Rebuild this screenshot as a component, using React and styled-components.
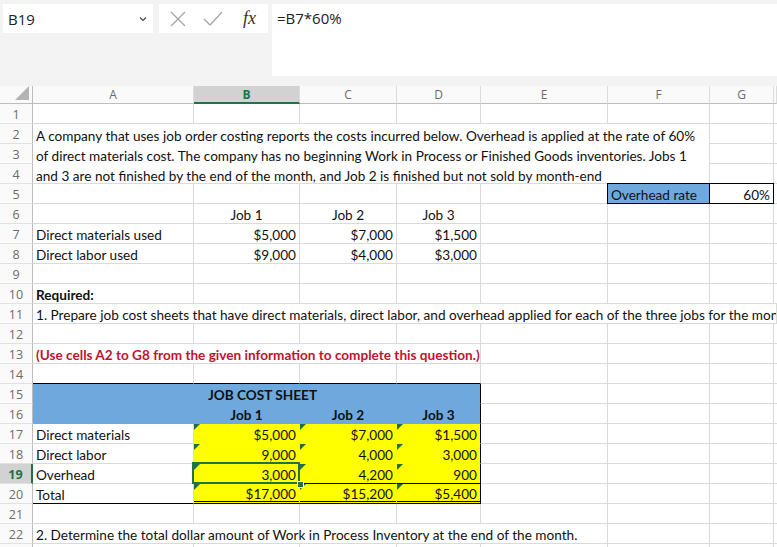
import React from 'react';
import styled, { createGlobalStyle, css } from 'styled-components';

const GREEN = '#217346';
const BLUE = '#6fa8dc';
const YELLOW = '#ffff00';
const RED = '#c0142c';
const GRID = '#dadada';
const BLACK = '#000';

const GlobalStyle = createGlobalStyle`
  html, body { margin: 0; padding: 0; background: #fff; overflow: hidden; }
  body { font-family: Lato, "Open Sans", sans-serif; }
`;

const Page = styled.div`
  width: 777px;
  height: 547px;
  overflow: hidden;
  background: #fff;
`;

const FormulaBar = styled.div`
  height: 86px;
  box-sizing: border-box;
  background: #f3f3f3;
  display: flex;
  align-items: flex-start;
  padding: 4px 0 0 3px;
`;

const NameBox = styled.div`
  width: 150px;
  height: 29px;
  box-sizing: border-box;
  background: #fff;
  display: flex;
  align-items: center;
  justify-content: space-between;
  padding: 0 5px 0 5px;
  font-family: "Open Sans", sans-serif;
  font-size: 15px;
  color: #222;
`;

const FnBox = styled.div`
  width: 109px;
  height: 29px;
  margin-left: 6px;
  box-sizing: border-box;
  background: #fff;
  display: flex;
  align-items: center;
  padding: 0 0 0 9px;
  gap: 14px;
`;

const FxLabel = styled.span`
  font-family: "Liberation Serif", serif;
  font-style: italic;
  font-size: 18px;
  color: #333;
  margin-left: 5px;
`;

const FormulaInput = styled.div`
  flex: 1;
  height: 72px;
  margin-left: 4px;
  box-sizing: border-box;
  background: #fff;
  padding: 4px 5px;
  font-family: "Open Sans", sans-serif;
  font-size: 15px;
  color: #222;
`;

const Sheet = styled.div`
  display: grid;
  grid-template-columns: 33px 161px 106px 97px 84px 127px 102px 64px 3px;
  grid-template-rows: 18px;
  grid-auto-rows: 20px;
  font-size: 13.6px;
  color: #111;
`;

const Corner = styled.div`
  grid-area: 1 / 1;
  background: #fafafa;
  border-right: 1px solid #bdbdbd;
  border-bottom: 1px solid #bdbdbd;
  box-sizing: border-box;
  display: flex;
  align-items: flex-end;
  justify-content: flex-end;
  padding: 0 3px 3px 0;
`;

const ColHead = styled.div`
  grid-area: 1 / ${(p) => p.$col + 1};
  box-sizing: border-box;
  background: #fafafa;
  border-right: 1px solid #dcdcdc;
  border-bottom: 1px solid #bdbdbd;
  display: flex;
  align-items: center;
  justify-content: center;
  font-family: "Open Sans", sans-serif;
  font-size: 12px;
  color: #6b6b6b;
  ${(p) =>
    p.$active &&
    css`
      background: #d2d2d2;
      color: ${GREEN};
      font-weight: 700;
      border-bottom: 2px solid ${GREEN};
    `}
`;

const RowHead = styled.div`
  grid-area: ${(p) => p.$row + 1} / 1;
  box-sizing: border-box;
  background: #fafafa;
  border-right: 1px solid #bdbdbd;
  border-bottom: 1px solid #e1e1e1;
  display: flex;
  align-items: center;
  justify-content: center;
  padding-top: 2px;
  font-family: "Open Sans", sans-serif;
  font-size: 12.5px;
  color: #6b6b6b;
  ${(p) =>
    p.$active &&
    css`
      background: #d2d2d2;
      color: ${GREEN};
      font-weight: 700;
      border-right: 2px solid ${GREEN};
    `}
`;

const Cell = styled.div`
  grid-row: ${(p) => p.$row + 1} / span ${(p) => p.$rspan || 1};
  grid-column: ${(p) => p.$col + 1} / span ${(p) => p.$span || 1};
  position: relative;
  box-sizing: border-box;
  min-width: 0;
  overflow: ${(p) => (p.$selected ? 'visible' : 'hidden')};
  white-space: nowrap;
  background: ${(p) => p.$bg || '#fff'};
  border-right: 1px solid ${(p) => p.$br || GRID};
  border-bottom: ${(p) => p.$bb || `1px solid ${GRID}`};
  display: flex;
  flex-direction: column;
  justify-content: ${(p) => (p.$rspan ? 'flex-start' : 'center')};
  align-items: ${(p) =>
    p.$align === 'right' ? 'flex-end' : p.$align === 'center' ? 'center' : 'flex-start'};
  padding: 2px 3px 0 ${(p) => p.$indent || 3}px;
  font-weight: ${(p) => (p.$bold ? 700 : 400)};
  color: ${(p) => p.$color || '#111'};
  ${(p) =>
    p.$boxed &&
    css`
      box-shadow: 0 -1px 0 ${BLACK}, -1px 0 0 ${BLACK}, -1px -1px 0 ${BLACK};
      z-index: 1;
    `}
  ${(p) =>
    p.$flag &&
    css`
      &::before {
        content: '';
        position: absolute;
        top: 0;
        left: 0;
        border-top: 6px solid #1e7145;
        border-right: 6px solid transparent;
      }
    `}
  ${(p) =>
    p.$selected &&
    css`
      z-index: 2;
      &::after {
        content: '';
        position: absolute;
        top: -2px;
        left: -2px;
        right: -1px;
        bottom: -1px;
        border: 2px solid ${GREEN};
      }
    `}
`;

const Line = styled.span`
  display: block;
  height: 20px;
  line-height: 20px;
`;

const Handle = styled.span`
  position: absolute;
  right: -5px;
  bottom: -5px;
  width: 5px;
  height: 5px;
  background: ${GREEN};
  border: 1px solid #fff;
  z-index: 3;
`;

const CloseIcon = () => (
  <svg width="20" height="20" viewBox="0 0 20 20">
    <path d="M3 3 L17 17 M17 3 L3 17" stroke="#a6a6a6" strokeWidth="1.3" fill="none" />
  </svg>
);

const CheckIcon = () => (
  <svg width="22" height="20" viewBox="0 0 22 20">
    <path d="M2 10 L8 16 L20 3" stroke="#a6a6a6" strokeWidth="1.3" fill="none" />
  </svg>
);

const Chevron = () => (
  <svg width="10" height="8" viewBox="0 0 10 8">
    <path d="M2 2.5 L5 5.5 L8 2.5" stroke="#444" strokeWidth="1.2" fill="none" />
  </svg>
);

const CornerMark = () => (
  <svg width="14" height="14" viewBox="0 0 14 14">
    <polygon points="14,0 14,14 0,14" fill="#b4b4b4" />
  </svg>
);

const COLS = ['A', 'B', 'C', 'D', 'E', 'F', 'G', ''];
const ROW_COUNT = 23;

// row -> list of cell specs (col 1 = A)
const yellowRow = (row, values, last) =>
  values.map((v, i) => ({
    col: i + 2,
    text: v,
    align: 'right',
    bg: YELLOW,
    flag: true,
    br: i === 2 ? BLACK : YELLOW,
    bb: last ? `3px double ${BLACK}` : row === 19 ? `1px solid ${BLACK}` : `1px solid ${YELLOW}`,
    selected: row === 19 && i === 0,
  }));

const SPECS = {
  2: [
    {
      col: 1,
      span: 6,
      rspan: 3,
      lines: [
        'A company that uses job order costing reports the costs incurred below. Overhead is applied at the rate of 60%',
        'of direct materials cost. The company has no beginning Work in Process or Finished Goods inventories. Jobs 1',
        'and 3 are not finished by the end of the month, and Job 2 is finished but not sold by month-end',
      ],
    },
  ],
  4: [{ col: 7, bb: `1px solid ${BLACK}` }],
  5: [
    { col: 5, br: BLACK },
    { col: 6, text: 'Overhead rate', bg: BLUE, br: BLACK, bb: `1px solid ${BLACK}`, boxed: true },
    { col: 7, text: '60%', align: 'right', br: BLACK, bb: `1px solid ${BLACK}`, boxed: true },
  ],
  6: [
    { col: 2, text: 'Job 1', align: 'center' },
    { col: 3, text: 'Job 2', align: 'center' },
    { col: 4, text: 'Job 3', align: 'center' },
  ],
  7: [
    { col: 1, text: 'Direct materials used' },
    { col: 2, text: '$5,000', align: 'right' },
    { col: 3, text: '$7,000', align: 'right' },
    { col: 4, text: '$1,500', align: 'right' },
  ],
  8: [
    { col: 1, text: 'Direct labor used' },
    { col: 2, text: '$9,000', align: 'right' },
    { col: 3, text: '$4,000', align: 'right' },
    { col: 4, text: '$3,000', align: 'right' },
  ],
  10: [{ col: 1, text: 'Required:', bold: true }],
  11: [
    {
      col: 1,
      span: 8,
      text: '1. Prepare job cost sheets that have direct materials, direct labor, and overhead applied for each of the three jobs for the month.',
    },
  ],
  13: [
    {
      col: 1,
      span: 4,
      text: '(Use cells A2 to G8 from the given information to complete this question.)',
      bold: true,
      color: RED,
    },
  ],
  14: [1, 2, 3, 4].map((col) => ({ col, bb: `1px solid ${BLACK}` })),
  15: [
    { col: 1, bg: BLUE, br: BLUE, bb: `1px solid ${BLUE}` },
    { col: 2, span: 2, text: 'JOB COST SHEET', bold: true, indent: 14, bg: BLUE, br: BLUE, bb: `1px solid ${BLUE}` },
    { col: 4, bg: BLUE, br: BLACK, bb: `1px solid ${BLUE}` },
  ],
  16: [
    { col: 1, bg: BLUE, br: BLUE, bb: `1px solid ${BLUE}` },
    { col: 2, text: 'Job 1', bold: true, align: 'center', bg: BLUE, br: BLUE, bb: `1px solid ${BLUE}` },
    { col: 3, text: 'Job 2', bold: true, align: 'center', bg: BLUE, br: BLUE, bb: `1px solid ${BLUE}` },
    { col: 4, text: 'Job 3', bold: true, align: 'center', bg: BLUE, br: BLACK, bb: `1px solid ${BLUE}` },
  ],
  17: [{ col: 1, text: 'Direct materials' }, ...yellowRow(17, ['$5,000', '$7,000', '$1,500'])],
  18: [{ col: 1, text: 'Direct labor' }, ...yellowRow(18, ['9,000', '4,000', '3,000'])],
  19: [{ col: 1, text: 'Overhead' }, ...yellowRow(19, ['3,000', '4,200', '900'])],
  20: [
    { col: 1, text: 'Total', bb: `1px solid ${BLACK}` },
    ...yellowRow(20, ['$17,000', '$15,200', '$5,400'], true),
  ],
  22: [
    {
      col: 1,
      span: 5,
      text: '2. Determine the total dollar amount of Work in Process Inventory at the end of the month.',
    },
  ],
};

const buildCells = () => {
  const covered = new Set();
  const cells = [];
  for (let row = 1; row <= ROW_COUNT; row++) {
    const specs = SPECS[row] || [];
    specs.forEach((s) => {
      for (let r = row; r < row + (s.rspan || 1); r++)
        for (let c = s.col; c < s.col + (s.span || 1); c++) covered.add(`${r}-${c}`);
      cells.push({ ...s, row });
    });
    for (let col = 1; col <= 8; col++) {
      if (!covered.has(`${row}-${col}`)) {
        covered.add(`${row}-${col}`);
        cells.push({ row, col });
      }
    }
  }
  return cells;
};

const CELLS = buildCells();

const App = () => (
  <Page>
    <GlobalStyle />
    <FormulaBar>
      <NameBox>
        <span>B19</span>
        <Chevron />
      </NameBox>
      <FnBox>
        <CloseIcon />
        <CheckIcon />
        <FxLabel>fx</FxLabel>
      </FnBox>
      <FormulaInput>=B7*60%</FormulaInput>
    </FormulaBar>
    <Sheet>
      <Corner>
        <CornerMark />
      </Corner>
      {COLS.map((c, i) => (
        <ColHead key={i} $col={i + 1} $active={c === 'B'}>
          {c}
        </ColHead>
      ))}
      {Array.from({ length: ROW_COUNT }, (_, i) => (
        <RowHead key={i} $row={i + 1} $active={i + 1 === 19}>
          {i + 1 < ROW_COUNT ? i + 1 : ''}
        </RowHead>
      ))}
      {CELLS.map((c) => (
        <Cell
          key={`${c.row}-${c.col}`}
          $row={c.row}
          $col={c.col}
          $span={c.span}
          $rspan={c.rspan}
          $align={c.align}
          $bg={c.bg}
          $br={c.br}
          $bb={c.bb}
          $bold={c.bold}
          $color={c.color}
          $indent={c.indent}
          $flag={c.flag}
          $boxed={c.boxed}
          $selected={c.selected}
        >
          {c.lines ? c.lines.map((l) => <Line key={l}>{l}</Line>) : c.text}
          {c.selected && <Handle />}
        </Cell>
      ))}
    </Sheet>
  </Page>
);

export default App;
